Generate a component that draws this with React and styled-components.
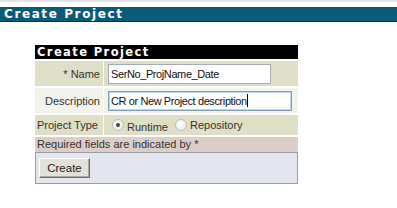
import React from 'react'
import styled, { createGlobalStyle } from 'styled-components'

const GlobalStyle = createGlobalStyle`
  html, body {
    margin: 0;
    padding: 0;
    background: #fff;
    font-family: "Liberation Sans", Arial, sans-serif;
  }
`

const Page = styled.div`
  width: 397px;
  height: 208px;
  border-top: 2px solid #e2e2e2;
  box-sizing: border-box;
  overflow: hidden;
`

const TitleBar = styled.div`
  margin-top: 5px;
  height: 14px;
  background: #0c5a79;
  border-bottom: 1px solid #063446;
  color: #fff;
  font-family: "DejaVu Sans", Verdana, sans-serif;
  font-weight: bold;
  font-size: 12px;
  letter-spacing: 1.6px;
  line-height: 14px;
  padding-left: 4px;
`

const Panel = styled.div`
  margin: 23px 0 0 35px;
  width: 263px;
  display: flex;
  flex-direction: column;
  gap: 2px;
`

const PanelHeader = styled.div`
  height: 14px;
  background: #000;
  color: #fff;
  font-family: "DejaVu Sans", Verdana, sans-serif;
  font-weight: bold;
  font-size: 11.5px;
  letter-spacing: 1.4px;
  line-height: 14px;
  padding-left: 2px;
`

const Row = styled.div`
  display: grid;
  grid-template-columns: 68px 1fr;
  column-gap: 1px;
  height: ${p => p.h}px;
`

const Label = styled.div`
  background: ${p => p.bg};
  display: flex;
  align-items: center;
  justify-content: ${p => (p.left ? 'flex-start' : 'flex-end')};
  padding: 0 3px 0 2px;
  font-size: 11px;
  color: #333;
  white-space: nowrap;
`

const Cell = styled.div`
  background: ${p => p.bg};
  display: flex;
  align-items: center;
  padding-left: 4px;
  font-size: 11px;
  color: #333;
`

const Input = styled.div`
  box-sizing: border-box;
  width: ${p => p.w}px;
  height: 20px;
  background: #fff;
  border: 1px solid ${p => (p.focus ? '#7f9db9' : '#a5acb2')};
  ${p => p.focus && 'box-shadow: inset 0 0 0 1px #c5d5e8;'}
  font-size: 11px;
  letter-spacing: -0.4px;
  color: #111;
  line-height: 18px;
  padding-left: 2px;
  white-space: nowrap;
`

const Caret = styled.span`
  display: inline-block;
  width: 1px;
  height: 13px;
  background: #000;
  vertical-align: -2px;
`

const Radio = styled.span`
  box-sizing: border-box;
  width: 12px;
  height: 12px;
  border-radius: 50%;
  border: 1px solid #b8bcc4;
  background: radial-gradient(circle at 40% 40%, #fff 0%, #e4e4e0 100%);
  display: inline-flex;
  align-items: center;
  justify-content: center;
  margin: 0 3px 0 ${p => p.ml || 0}px;
  &::after {
    content: '';
    width: 4px;
    height: 4px;
    border-radius: 50%;
    background: ${p => (p.checked ? '#444' : 'transparent')};
  }
`

const RadioText = styled.span`
  margin-top: 3px;
`

const Notice = styled.div`
  height: 15px;
  background: #dccdc7;
  font-size: 11px;
  color: #333;
  line-height: 15px;
  padding-left: 2px;
`

const Footer = styled.div`
  box-sizing: border-box;
  height: 32px;
  margin-top: -2px;
  background: #e3e6ee;
  border: 1px solid #9a9ca4;
  display: flex;
  align-items: center;
  padding-left: 3px;
`

const Button = styled.div`
  box-sizing: border-box;
  width: 51px;
  height: 20px;
  background: #e2e1d8;
  border: 1px solid;
  border-color: #fff #6e6e6e #6e6e6e #fff;
  box-shadow: inset -1px -1px 0 #a8a8a0;
  font-size: 11.5px;
  color: #222;
  display: flex;
  align-items: center;
  justify-content: center;
`

export default function App() {
  return (
    <Page>
      <GlobalStyle />
      <TitleBar>Create Project</TitleBar>
      <Panel>
        <PanelHeader>Create Project</PanelHeader>
        <Row h={25}>
          <Label bg="#dfdec6">* Name</Label>
          <Cell bg="#dfdec6">
            <Input w={163}>SerNo_ProjName_Date</Input>
          </Cell>
        </Row>
        <Row h={25}>
          <Label bg="#f3f3ee">Description</Label>
          <Cell bg="#f3f3ee">
            <Input w={184} focus>CR or New Project description<Caret /></Input>
          </Cell>
        </Row>
        <Row h={20}>
          <Label bg="#dfdec6" left>Project Type</Label>
          <Cell bg="#dfdec6">
            <Radio ml={4} checked />
            <RadioText>Runtime</RadioText>
            <Radio ml={7} />
            <span>Repository</span>
          </Cell>
        </Row>
        <Notice>Required fields are indicated by *</Notice>
        <Footer>
          <Button>Create</Button>
        </Footer>
      </Panel>
    </Page>
  )
}
